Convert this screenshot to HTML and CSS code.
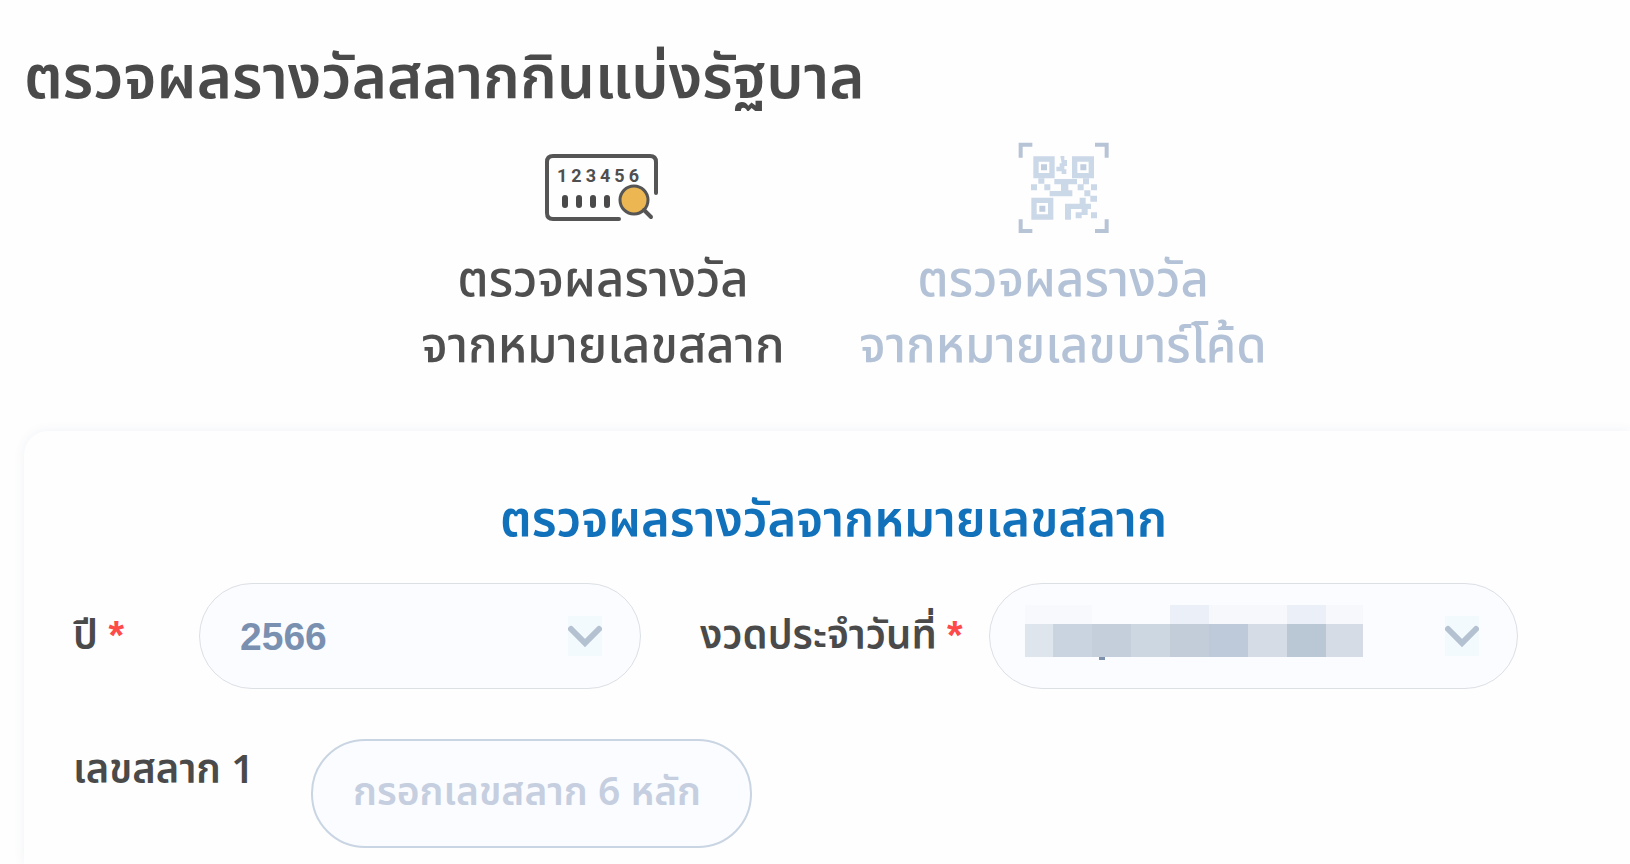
FILE: index.html
```
<!DOCTYPE html>
<html lang="th">
<head>
<meta charset="utf-8">
<title>ตรวจผลรางวัลสลากกินแบ่งรัฐบาล</title>
<link rel="stylesheet" href="styles.css">
</head>
<body>
<main class="page">
  <h1 class="page-title">ตรวจผลรางวัลสลากกินแบ่งรัฐบาล</h1>

  <div class="tabs" role="tablist">
    <button class="tab tab-active" type="button" role="tab" aria-selected="true">
      <svg class="tab-icon" viewBox="0 0 120 96" aria-hidden="true">
        <path d="M76 79H10Q4 79 4 73V22Q4 16 10 16H107Q113 16 113 22V53" fill="none" stroke="#555" stroke-width="4" stroke-linecap="round"/>
        <text class="ticket-digits" x="14" y="42">123456</text>
        <path d="M22 58v7M36 58v7M50 58v7M64 58v7" stroke="#4a4a4a" stroke-width="6" stroke-linecap="round"/>
        <circle cx="91" cy="60" r="14" fill="#ecb752" stroke="#555" stroke-width="3"/>
        <path d="M101 70L108 77" stroke="#555" stroke-width="4" stroke-linecap="round"/>
      </svg>
      <span>ตรวจผลรางวัล<br>จากหมายเลขสลาก</span>
    </button>
    <button class="tab" type="button" role="tab" aria-selected="false">
      <svg class="tab-icon" viewBox="0 0 360 288" aria-hidden="true">
        <g fill="none" stroke="#b7c4d6" stroke-width="12">
          <path d="M53 53V14H88M276 14H311V53M53 238V273H88M276 273H311V238"/>
        </g>
        <g fill="none" stroke="#cbd8e8" stroke-width="16">
          <path d="M99 57H147V107H99ZM215 57H265V107H215ZM93 181H143V231H93Z"/>
        </g>
        <g fill="#c0cee0"><path d="M114 73h18v18h-18zM232 73h18v18h-18zM109 197h18v18h-18z"/></g>
        <path fill="#cbd8e8" d="M172 48h12v12h8v18h-8v10h6v14h-14v-8h-16v-14h10v-10h6zM106 115h18v16h-18zM84 133h18v18h-18zM124 133h18v18h-18zM154 117h68v16h-26v18h12v18h-68v-16h34v-20h-20zM240 115h18v18h-18zM224 133h18v18h-18zM264 133h18v18h-18zM244 151h18v16h20v18h-20v-16h-18zM230 173h18v18h16v16h-10v18h-18v-18h-32v32h-18v-48h44zM218 217h18v18h-18zM264 217h18v18h-18z"/>
      </svg>
      <span>ตรวจผลรางวัล<br>จากหมายเลขบาร์โค้ด</span>
    </button>
  </div>

  <section class="card">
    <h2 class="card-title">ตรวจผลรางวัลจากหมายเลขสลาก</h2>
    <form class="form">
      <div class="row">
        <label class="label label-year" for="year">ปี <span class="required">*</span></label>
        <div class="select-wrap select-year">
          <select class="field" id="year"><option>2566</option></select>
          <svg class="chevron" viewBox="0 0 34 40" aria-hidden="true"><path fill="#f3fafe" d="M0 0h34v40H0z"/><path d="M3 13L17 27L31 13" fill="none" stroke="#b3c1d1" stroke-width="6" stroke-linecap="round"/></svg>
        </div>
        <label class="label label-date" for="date">งวดประจำวันที่ <span class="required">*</span></label>
        <div class="select-wrap select-date">
          <select class="field" id="date"><option></option></select>
          <svg class="masked" viewBox="0 0 338 55" aria-hidden="true" shape-rendering="crispEdges">
            <path fill="#f8f9fc" d="M0 0h67v19H0z"/>
            <path fill="#ebf0f8" d="M145 0h39v19h-39zM262 0h39v19h-39z"/>
            <path fill="#f6f8fc" d="M184 0h78v19h-78zM301 0h37v19h-37z"/>
            <path fill="#dfe5ec" d="M0 19h28v33H0z"/>
            <path fill="#cad4e0" d="M28 19h39v33H28z"/>
            <path fill="#c5cfdc" d="M67 19h39v33H67z"/>
            <path fill="#cdd7e2" d="M106 19h39v33h-39z"/>
            <path fill="#c3ccd9" d="M145 19h39v33h-39z"/>
            <path fill="#becad9" d="M184 19h39v33h-39z"/>
            <path fill="#d5dce6" d="M223 19h39v33h-39zM301 19h37v33h-37z"/>
            <path fill="#bac7d5" d="M262 19h39v33h-39z"/>
            <path fill="#7f92ad" d="M74 52h6v3h-6z"/>
          </svg>
          <svg class="chevron" viewBox="0 0 34 40" aria-hidden="true"><path fill="#f3fafe" d="M0 0h34v40H0z"/><path d="M3 13L17 27L31 13" fill="none" stroke="#b3c1d1" stroke-width="6" stroke-linecap="round"/></svg>
        </div>
      </div>
      <div class="row row-ticket">
        <label class="label label-ticket" for="ticket">เลขสลาก 1</label>
        <input class="field field-ticket" id="ticket" type="text" placeholder="กรอกเลขสลาก 6 หลัก">
      </div>
    </form>
  </section>
</main>
</body>
</html>
```
FILE: styles.css
```
* { box-sizing: border-box; }

body {
  margin: 0;
  background: #fefefe;
  color: #4a4a4a;
  font-family: "Noto Sans Thai", "Liberation Sans", sans-serif;
  overflow: hidden;
}

.page {
  min-height: 100vh;
  padding: 40px 0 0 24px;
  display: flex;
  flex-direction: column;
}

.page-title {
  margin: 0;
  font-size: 60px;
  line-height: 80px;
  font-weight: 600;
}

.tabs {
  display: flex;
  justify-content: center;
  gap: 60px;
  margin-top: 20px;
  padding-left: 12px;
}

.tab {
  width: 400px;
  padding: 0;
  border: 0;
  background: none;
  color: #b3c2d6;
  font-family: inherit;
  font-size: 49px;
  line-height: 66px;
  font-weight: 500;
  white-space: nowrap;
  display: flex;
  flex-direction: column;
  align-items: center;
}

.tab-active { color: #4f4f4f; }

.tab-icon {
  width: 120px;
  height: 96px;
  margin-bottom: 12px;
}

.ticket-digits {
  font-family: Roboto, sans-serif;
  font-size: 18px;
  font-weight: 700;
  letter-spacing: 4px;
  fill: #4f4f4f;
}

.card {
  flex: 1;
  margin-top: 51px;
  padding: 56px 48px 16px 49px;
  border-radius: 24px 0 0 0;
  background: #fefefe;
  box-shadow: 0 0 12px rgba(60, 80, 160, 0.07);
}

.card-title {
  margin: 0;
  padding-left: 12px;
  text-align: center;
  color: #1171bb;
  font-size: 49px;
  line-height: 68px;
  font-weight: 600;
}

.form { margin-top: 28px; }

.row {
  display: flex;
  align-items: center;
}

.row-ticket {
  margin-top: 50px;
  align-items: flex-start;
}

.label {
  font-size: 40px;
  line-height: 64px;
  font-weight: 600;
  white-space: nowrap;
}

.label-year { width: 126px; }
.label-date { margin-left: 59px; width: 289px; }
.label-ticket { width: 238px; }

.required {
  color: #ff4a4a;
  font-family: "Liberation Sans", sans-serif;
  font-weight: 700;
}

.select-wrap { position: relative; }
.select-year { width: 442px; }
.select-date { width: 529px; }

.field {
  width: 100%;
  height: 106px;
  padding: 0 40px;
  border: 1px solid #dcdfe4;
  border-radius: 54px;
  background: #fbfcff;
  color: #7a90b0;
  font-family: "Liberation Sans", "Noto Sans Thai", sans-serif;
  font-size: 39px;
  font-weight: 700;
  appearance: none;
}

.field-ticket {
  width: 441px;
  height: 109px;
  border: 2px solid #c9d5e2;
  font-family: inherit;
  font-weight: 600;
}

.field-ticket::placeholder {
  color: #c6cfdf;
  opacity: 1;
}

.chevron {
  position: absolute;
  top: 33px;
  right: 39px;
  width: 34px;
  height: 40px;
  pointer-events: none;
}

.masked {
  position: absolute;
  top: 22px;
  left: 36px;
  width: 338px;
  height: 55px;
  pointer-events: none;
}
```
